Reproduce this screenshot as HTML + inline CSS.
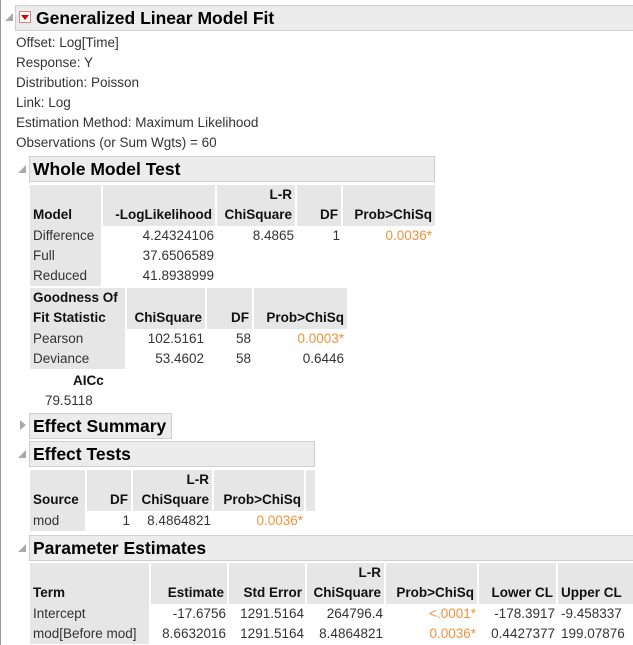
<!DOCTYPE html>
<html><head><meta charset="utf-8"><style>
body{margin:0;width:633px;height:645px;background:#fff;font-family:"Liberation Sans",Arial,sans-serif;color:#222;position:relative;overflow:hidden}
.a{position:absolute;white-space:nowrap}
.hdr{position:absolute;background:#ececec;border:1px solid #cfcfcf;box-sizing:border-box;font-weight:bold;font-size:17.5px;color:#000;padding-left:3px;line-height:25px}
.tri{position:absolute;width:0;height:0}
.dn{border-left:8px solid transparent;border-bottom:8px solid #aaa}
.txt{font-size:13.5px;color:#333}
table{position:absolute;border-collapse:separate;border-spacing:0;font-size:13.5px;table-layout:fixed}
td{padding:0 3px;height:20px;line-height:20px;white-space:nowrap;color:#333;text-align:right}
th{background:#e6e6e6;border-right:2px solid #fff;font-weight:bold;color:#111;text-align:right;vertical-align:bottom;padding:0 3px 1px 3px;line-height:20px;font-size:13.5px;white-space:nowrap}
th.l,td.l{text-align:left}
td.g{background:#e6e6e6;border-right:2px solid #fff;text-align:left}
.o{color:#f0923a}
</style></head><body>
<div style="position:absolute;left:0;top:0;width:1px;height:645px;background:#999"></div>
<div class="tri dn" style="left:5px;top:13px"></div>
<div class="hdr" style="left:15px;top:5px;width:630px;height:26px;padding-left:20px;font-size:17.5px">Generalized Linear Model Fit</div>
<div style="position:absolute;left:19px;top:11px;width:12px;height:12px;background:#fff;border:1px solid #e08080;box-sizing:border-box"></div>
<div class="tri" style="left:21px;top:15px;border-left:4px solid transparent;border-right:4px solid transparent;border-top:5px solid #d40000"></div>
<div class="a txt" style="left:16px;top:35px">Offset: Log[Time]</div>
<div class="a txt" style="left:16px;top:55px">Response: Y</div>
<div class="a txt" style="left:16px;top:75px">Distribution: Poisson</div>
<div class="a txt" style="left:16px;top:95px">Link: Log</div>
<div class="a txt" style="left:16px;top:115px">Estimation Method: Maximum Likelihood</div>
<div class="a txt" style="left:16px;top:135px">Observations (or Sum Wgts) = 60</div>

<div class="tri dn" style="left:18px;top:165px"></div>
<div class="hdr" style="left:29px;top:156px;width:406px;height:26px">Whole Model Test</div>
<table style="left:30px;top:185px;width:405px">
<colgroup><col style="width:73px"><col style="width:114px"><col style="width:80px"><col style="width:46px"><col style="width:92px"></colgroup>
<tr><th class="l" style="height:38px">Model</th><th>-LogLikelihood</th><th>L-R<br>ChiSquare</th><th>DF</th><th style="border-right:0">Prob&gt;ChiSq</th></tr>
<tr><td class="g">Difference</td><td>4.24324106</td><td>8.4865</td><td>1</td><td class="o">0.0036*</td></tr>
<tr><td class="g">Full</td><td>37.6506589</td><td></td><td></td><td></td></tr>
<tr><td class="g">Reduced</td><td>41.8938999</td><td></td><td></td><td></td></tr>
</table>
<table style="left:30px;top:288px;width:317px">
<colgroup><col style="width:97px"><col style="width:80px"><col style="width:47px"><col style="width:93px"></colgroup>
<tr><th class="l" style="height:38px">Goodness Of<br>Fit Statistic</th><th>ChiSquare</th><th>DF</th><th style="border-right:0">Prob&gt;ChiSq</th></tr>
<tr><td class="g">Pearson</td><td>102.5161</td><td>58</td><td class="o">0.0003*</td></tr>
<tr><td class="g">Deviance</td><td>53.4602</td><td>58</td><td>0.6446</td></tr>
</table>
<div class="a" style="left:73px;top:373px;font-weight:bold;font-size:13.5px;color:#111">AICc</div>
<div class="a txt" style="left:45px;top:393px">79.5118</div>

<div class="tri" style="left:20px;top:420px;border-top:5px solid transparent;border-bottom:5px solid transparent;border-left:6px solid #aaa"></div>
<div class="hdr" style="left:29px;top:413px;width:143px;height:26px">Effect Summary</div>
<div class="tri dn" style="left:18px;top:450px"></div>
<div class="hdr" style="left:29px;top:441px;width:286px;height:26px">Effect Tests</div>
<table style="left:30px;top:470px;width:285px">
<colgroup><col style="width:57px"><col style="width:46px"><col style="width:81px"><col style="width:92px"><col style="width:9px"></colgroup>
<tr><th class="l" style="height:38px">Source</th><th>DF</th><th>L-R<br>ChiSquare</th><th>Prob&gt;ChiSq</th><th style="border-right:0"></th></tr>
<tr><td class="g">mod</td><td>1</td><td>8.4864821</td><td class="o">0.0036*</td><td></td></tr>
</table>

<div class="tri dn" style="left:18px;top:544px"></div>
<div class="hdr" style="left:29px;top:535px;width:610px;height:26px">Parameter Estimates</div>
<table style="left:30px;top:563px;width:610px">
<colgroup><col style="width:121px"><col style="width:78px"><col style="width:78px"><col style="width:79px"><col style="width:93px"><col style="width:79px"><col style="width:82px"></colgroup>
<tr><th class="l" style="height:38px">Term</th><th>Estimate</th><th>Std Error</th><th>L-R<br>ChiSquare</th><th>Prob&gt;ChiSq</th><th>Lower CL</th><th style="text-align:left">Upper CL</th></tr>
<tr><td class="g">Intercept</td><td>-17.6756</td><td>1291.5164</td><td>264796.4</td><td class="o">&lt;.0001*</td><td>-178.3917</td><td class="l">-9.458337</td></tr>
<tr><td class="g">mod[Before mod]</td><td>8.6632016</td><td>1291.5164</td><td>8.4864821</td><td class="o">0.0036*</td><td>0.4427377</td><td class="l">199.07876</td></tr>
</table>
</body></html>
